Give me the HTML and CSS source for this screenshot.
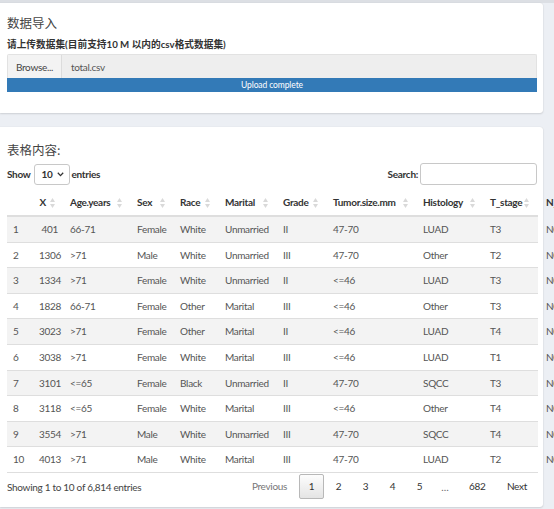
FILE: index.html
```html
<!DOCTYPE html>
<html lang="zh">
<head>
<meta charset="utf-8">
<title>数据导入</title>
<link rel="stylesheet" href="styles.css">
</head>
<body>
<div class="top-strip"></div>
<section class="card card-upload">
  <h3 class="card-title">数据导入</h3>
  <div class="field-label">请上传数据集(目前支持10 M 以内的csv格式数据集)</div>
  <div class="file-group">
    <span class="browse">Browse...</span>
    <span class="file-name">total.csv</span>
  </div>
  <div class="progress"><div class="progress-bar">Upload complete</div></div>
</section>

<section class="card card-table">
  <h3 class="card-title title-table">表格内容:</h3>
  <div class="dt-top">
    <div class="dt-length">
      <span>Show</span>
      <span class="select">10<svg class="chev" width="7" height="5" viewBox="0 0 7 5"><path d="M0.8 0.8L3.5 3.6L6.2 0.8" fill="none" stroke="#333" stroke-width="1.3"/></svg></span>
      <span>entries</span>
    </div>
    <div class="dt-search">
      <span>Search:</span>
      <span class="search-input"></span>
    </div>
  </div>
  <table class="dt">
    <colgroup>
      <col class="c-idx"><col class="c-x"><col class="c-age"><col class="c-sex"><col class="c-race"><col class="c-mar"><col class="c-grade"><col class="c-tum"><col class="c-hist"><col class="c-t"><col class="c-n">
    </colgroup>
    <thead>
      <tr>
        <th class="plain"></th>
        <th class="num"><div class="th-in"><span>X</span><svg class="sort" width="5" height="10" viewBox="0 0 5 10"><path d="M2.5 0L5 4H0z M2.5 10L0 6H5z"/></svg></div></th>
        <th><div class="th-in"><span>Age.years</span><svg class="sort" width="5" height="10" viewBox="0 0 5 10"><path d="M2.5 0L5 4H0z M2.5 10L0 6H5z"/></svg></div></th>
        <th><div class="th-in"><span>Sex</span><svg class="sort" width="5" height="10" viewBox="0 0 5 10"><path d="M2.5 0L5 4H0z M2.5 10L0 6H5z"/></svg></div></th>
        <th><div class="th-in"><span>Race</span><svg class="sort" width="5" height="10" viewBox="0 0 5 10"><path d="M2.5 0L5 4H0z M2.5 10L0 6H5z"/></svg></div></th>
        <th><div class="th-in"><span>Marital</span><svg class="sort" width="5" height="10" viewBox="0 0 5 10"><path d="M2.5 0L5 4H0z M2.5 10L0 6H5z"/></svg></div></th>
        <th><div class="th-in"><span>Grade</span><svg class="sort" width="5" height="10" viewBox="0 0 5 10"><path d="M2.5 0L5 4H0z M2.5 10L0 6H5z"/></svg></div></th>
        <th><div class="th-in"><span>Tumor.size.mm</span><svg class="sort" width="5" height="10" viewBox="0 0 5 10"><path d="M2.5 0L5 4H0z M2.5 10L0 6H5z"/></svg></div></th>
        <th><div class="th-in"><span>Histology</span><svg class="sort" width="5" height="10" viewBox="0 0 5 10"><path d="M2.5 0L5 4H0z M2.5 10L0 6H5z"/></svg></div></th>
        <th><div class="th-in"><span>T_stage</span><svg class="sort" width="5" height="10" viewBox="0 0 5 10"><path d="M2.5 0L5 4H0z M2.5 10L0 6H5z"/></svg></div></th>
        <th class="last"><div class="th-in"><span>N_stage</span></div></th>
      </tr>
    </thead>
    <tbody>
      <tr><td>1</td><td class="num">401</td><td>66-71</td><td>Female</td><td>White</td><td>Unmarried</td><td>II</td><td>47-70</td><td>LUAD</td><td>T3</td><td class="last">N0</td></tr>
      <tr><td>2</td><td class="num">1306</td><td>&gt;71</td><td>Male</td><td>White</td><td>Unmarried</td><td>III</td><td>47-70</td><td>Other</td><td>T2</td><td class="last">N0</td></tr>
      <tr><td>3</td><td class="num">1334</td><td>&gt;71</td><td>Female</td><td>White</td><td>Unmarried</td><td>II</td><td>&lt;=46</td><td>LUAD</td><td>T3</td><td class="last">N0</td></tr>
      <tr><td>4</td><td class="num">1828</td><td>66-71</td><td>Female</td><td>Other</td><td>Marital</td><td>III</td><td>&lt;=46</td><td>Other</td><td>T3</td><td class="last">N0</td></tr>
      <tr><td>5</td><td class="num">3023</td><td>&gt;71</td><td>Female</td><td>Other</td><td>Marital</td><td>II</td><td>&lt;=46</td><td>LUAD</td><td>T4</td><td class="last">N0</td></tr>
      <tr><td>6</td><td class="num">3038</td><td>&gt;71</td><td>Female</td><td>White</td><td>Marital</td><td>III</td><td>&lt;=46</td><td>LUAD</td><td>T1</td><td class="last">N0</td></tr>
      <tr><td>7</td><td class="num">3101</td><td>&lt;=65</td><td>Female</td><td>Black</td><td>Unmarried</td><td>II</td><td>47-70</td><td>SQCC</td><td>T3</td><td class="last">N0</td></tr>
      <tr><td>8</td><td class="num">3118</td><td>&lt;=65</td><td>Female</td><td>White</td><td>Marital</td><td>III</td><td>&lt;=46</td><td>Other</td><td>T4</td><td class="last">N0</td></tr>
      <tr><td>9</td><td class="num">3554</td><td>&gt;71</td><td>Male</td><td>White</td><td>Unmarried</td><td>III</td><td>47-70</td><td>SQCC</td><td>T4</td><td class="last">N0</td></tr>
      <tr><td>10</td><td class="num">4013</td><td>&gt;71</td><td>Male</td><td>White</td><td>Marital</td><td>III</td><td>47-70</td><td>LUAD</td><td>T2</td><td class="last">N0</td></tr>
    </tbody>
  </table>
  <div class="dt-bottom">
    <div class="dt-info">Showing 1 to 10 of 6,814 entries</div>
    <div class="dt-paginate">
      <span class="pg disabled">Previous</span>
      <span class="pg current">1</span>
      <span class="pg">2</span>
      <span class="pg">3</span>
      <span class="pg">4</span>
      <span class="pg">5</span>
      <span class="ellipsis">…</span>
      <span class="pg">682</span>
      <span class="pg">Next</span>
    </div>
  </div>
</section>
</body>
</html>
```
FILE: styles.css
```css
html, body {
  margin: 0;
  padding: 0;
  overflow: hidden;
}
body {
  background: #eceff4;
  font-family: Lato, "Noto Sans CJK SC", sans-serif;
  font-size: 10px;
  letter-spacing: -0.3px;
  color: #333;
  width: 554px;
  height: 509px;
}
.top-strip {
  height: 3px;
  background: #dcdfe4;
}
.card {
  width: 543px;
  box-sizing: border-box;
  background: #fff;
  border-radius: 0 3px 3px 0;
  box-shadow: 0 0 1px rgba(0,0,0,.13), 0 1px 2px rgba(0,0,0,.12);
}
.card-upload {
  height: 110px;
  padding: 11px 6px 0 7px;
}
.card-table {
  margin-top: 14px;
  height: 380px;
  padding: 14px 6px 0 7px;
}
.card-title {
  margin: 0;
  font-family: "Noto Sans CJK SC", sans-serif;
  font-weight: 400;
  font-size: 12.5px;
  letter-spacing: 0;
  line-height: 18px;
  color: #444;
}
.field-label {
  margin-top: 5px;
  font-family: Lato, "Noto Sans CJK SC", sans-serif;
  font-weight: 700;
  font-size: 9.7px;
  letter-spacing: 0;
  line-height: 14px;
  color: #333;
}
.file-group {
  margin-top: 3px;
  height: 24px;
  display: flex;
  box-sizing: border-box;
  border: 1px solid #e2e2e2;
  border-bottom: 0;
  border-radius: 2px 2px 0 0;
  background: #eeeeee;
}
.browse {
  width: 54px;
  box-sizing: border-box;
  display: flex;
  align-items: center;
  justify-content: center;
  background: #f3f3f3;
  border-right: 1px solid #dcdcdc;
  color: #444;
}
.file-name {
  display: flex;
  align-items: center;
  padding-left: 9px;
  color: #555;
}
.progress {
  height: 14px;
  background: #f5f5f5;
}
.progress-bar {
  height: 100%;
  background: #337ab7;
  color: #fff;
  font-size: 8.5px;
  letter-spacing: -0.1px;
  line-height: 14px;
  text-align: center;
}
.dt-top {
  margin-top: 4px;
  height: 22px;
  display: flex;
  justify-content: space-between;
  align-items: center;
  font-weight: 700;
}
.dt-length, .dt-search {
  display: flex;
  align-items: center;
  height: 100%;
}
.select {
  width: 36px;
  height: 21px;
  box-sizing: border-box;
  margin: 0 2px 0 3px;
  border: 1px solid #c8c8c8;
  border-radius: 3px;
  display: flex;
  align-items: center;
  justify-content: space-between;
  padding: 0 5px 0 7px;
}
.chev { display: block; }
.search-input {
  width: 117px;
  height: 22px;
  box-sizing: border-box;
  margin-left: 2px;
  border: 1px solid #c8c8c8;
  border-radius: 3px;
}
table.dt {
  margin-top: 5px;
  table-layout: fixed;
  width: 593px;
  border-collapse: separate;
  border-spacing: 0;
}
col.c-idx { width: 26px; }
col.c-x { width: 31px; }
col.c-age { width: 67px; }
col.c-sex { width: 43px; }
col.c-race { width: 45px; }
col.c-mar { width: 58px; }
col.c-grade { width: 50px; }
col.c-tum { width: 90px; }
col.c-hist { width: 67px; }
col.c-t { width: 54px; }
col.c-n { width: 62px; }
.dt th {
  padding: 5px 9px 5px 6px;
  line-height: 15px;
  font-weight: 700;
  color: #333;
  text-align: left;
  border-bottom: 2px solid #dedede;
  white-space: nowrap;
}
.th-in {
  display: flex;
  align-items: center;
  justify-content: space-between;
}
.dt th.num .th-in {
  justify-content: flex-end;
  gap: 4px;
}
.sort {
  display: block;
  flex: none;
  fill: #d9d9d9;
}
.dt td {
  padding: 5px 6px;
  line-height: 14.6px;
  color: #555;
  border-bottom: 1px solid #dedede;
  white-space: nowrap;
  overflow: hidden;
}
.dt td.num {
  text-align: right;
}
.dt tbody tr:nth-child(odd) td {
  background: #f3f3f3;
}
.dt th.last,
.dt td.last,
.dt tbody tr:nth-child(odd) td.last {
  background: transparent;
  border-bottom-color: transparent;
  overflow: visible;
  padding-left: 8px;
}
.dt-bottom {
  margin-top: 2px;
  display: flex;
  justify-content: space-between;
  align-items: center;
  height: 24px;
}
.dt-info {
  color: #444;
}
.dt-paginate {
  display: flex;
  align-items: center;
}
.pg {
  margin-left: 1.5px;
  padding: 5px 9px;
  line-height: 13px;
  border: 1px solid transparent;
  border-radius: 2px;
  color: #333;
}
.pg.disabled {
  color: #777;
}
.pg.current {
  background: linear-gradient(#fdfdfd, #e4e4e4);
  border-color: #b8b8b8;
}
.ellipsis {
  padding: 0 9px;
  color: #666;
}
```
